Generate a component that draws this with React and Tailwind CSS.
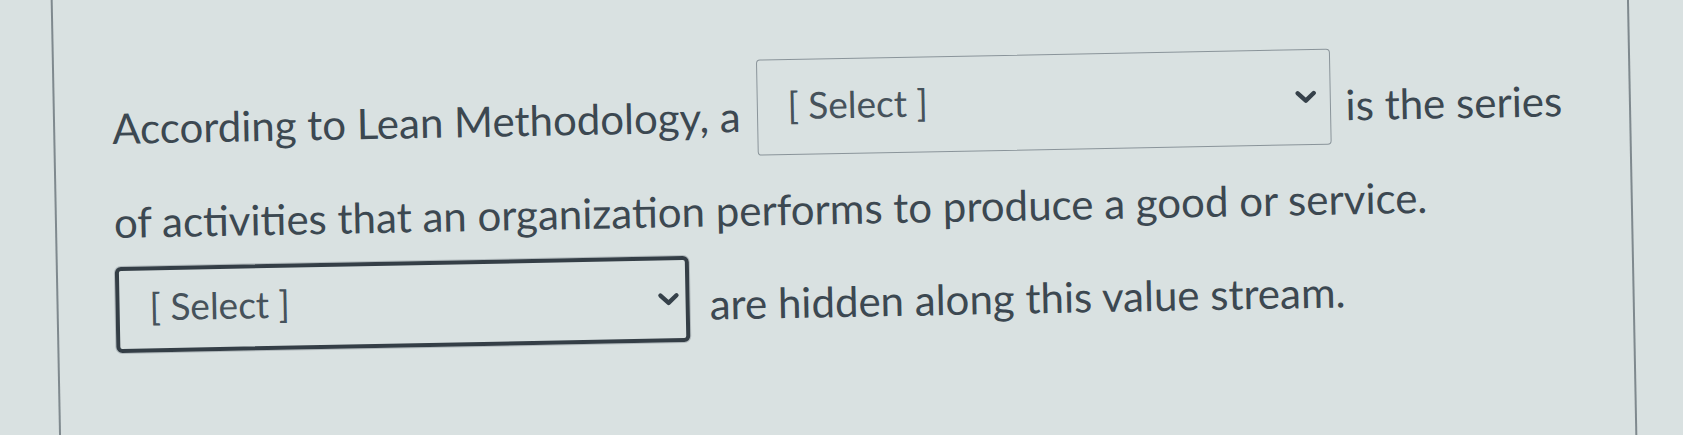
import React from 'react'

// Small bold chevron used by the dropdowns
const Chevron = ({ className = '' }) => (
  <svg viewBox="0 0 22 14" className={className} fill="none">
    <polyline
      points="3,3 11,10.5 19,3"
      stroke="#36414a"
      strokeWidth="4.4"
      strokeLinecap="round"
      strokeLinejoin="round"
    />
  </svg>
)

const SelectBox = ({ focused = false }) => {
  if (focused) {
    return (
      <div className="relative flex h-[86px] w-[574px] shrink-0 items-start rounded-md border-4 border-[#343e46] pl-[30px] pt-[17px] shadow-[0_0_0_1px_#b3bbbe]">
        <span className="text-[37px] leading-none text-[#46525b]">[ Select ]</span>
        <Chevron className="absolute right-[6px] top-1/2 h-[14px] w-[22px] -translate-y-1/2" />
      </div>
    )
  }
  return (
    <div className="relative flex h-[96px] w-[574px] shrink-0 items-start rounded border border-[#8a949a] pl-[30px] pt-[26px]">
      <span className="text-[37px] leading-none text-[#46525b]">[ Select ]</span>
      <Chevron className="absolute right-[13px] top-1/2 h-[14px] w-[22px] -translate-y-1/2" />
    </div>
  )
}

export default function App() {
  return (
    <div className="h-[435px] w-full overflow-hidden bg-[#d9e1e1] font-['Lato',sans-serif] text-[#3c4851]">
      <div className="-mt-[50px] ml-[55px] mr-[50px] h-[535px] rotate-[-1.1deg] border-x-2 border-[#7f898e] pl-[57px] pt-[108px]">
        <div className="flex items-end">
          <span className="mb-[19px] text-[42px] leading-none">According to Lean Methodology, a</span>
          <div className="ml-4">
            <SelectBox />
          </div>
          <span className="mb-[19px] ml-[15px] text-[42px] leading-none">is the series</span>
        </div>

        <p className="mt-[33px] text-[42px] leading-none">
          of activities that an organization performs to produce a good or service.
        </p>

        <div className="mt-[24px] flex items-end">
          <SelectBox focused />
          <span className="mb-[17px] ml-5 text-[42px] leading-none">are hidden along this value stream.</span>
        </div>
      </div>
    </div>
  )
}
